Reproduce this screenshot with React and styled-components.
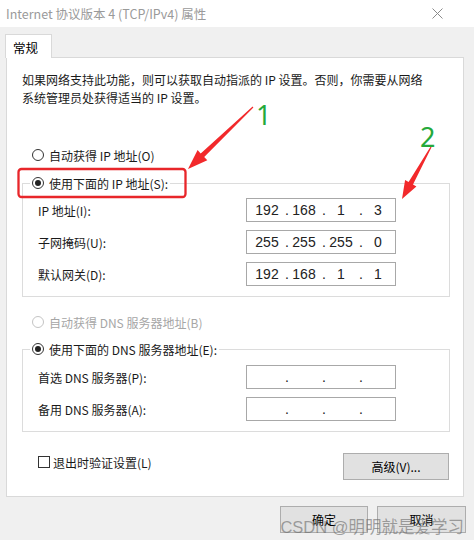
import React from "react";
import styled, { createGlobalStyle } from "styled-components";

const GlobalStyle = createGlobalStyle`
  html, body { margin: 0; padding: 0; background: #f0f0f0; }
  body { font-family: "Noto Sans CJK SC", "Noto Sans", sans-serif; }
`;

const arrowPoints = (tail, tip, headLen, headW, tailW, neckW) => {
  const dx = tip[0] - tail[0];
  const dy = tip[1] - tail[1];
  const len = Math.hypot(dx, dy);
  const ux = dx / len;
  const uy = dy / len;
  const nx = -uy;
  const ny = ux;
  const neck = [tip[0] - ux * headLen, tip[1] - uy * headLen];
  const p = (base, w) => [base[0] + nx * w, base[1] + ny * w];
  const pts = [
    p(tail, tailW / 2),
    p(neck, neckW / 2),
    p(neck, headW / 2),
    tip,
    p(neck, -headW / 2),
    p(neck, -neckW / 2),
    p(tail, -tailW / 2),
  ];
  return pts.map((q) => q.map((v) => v.toFixed(1)).join(",")).join(" ");
};

const App = () => {
  return (
    <>
      <GlobalStyle />
      <Window>
        <TitleBar>
          <Title>Internet 协议版本 4 (TCP/IPv4) 属性</Title>
          <CloseIcon viewBox="0 0 11 11">
            <path d="M0.5 0.5 L10.5 10.5 M10.5 0.5 L0.5 10.5" stroke="#8a8a8a" strokeWidth="1" />
          </CloseIcon>
        </TitleBar>
        <Body>
          <Tabs>
            <Tab>常规</Tab>
          </Tabs>
          <Panel>
            <Desc>
              如果网络支持此功能，则可以获取自动指派的 IP 设置。否则，你需要从网络
              <br />
              系统管理员处获得适当的 IP 设置。
            </Desc>
            <RadioRow $top={37}>
              <Radio />
              <span>自动获得 IP 地址(O)</span>
            </RadioRow>
            <Group $top={6}>
              <Legend>
                <Radio $checked />
                <span>使用下面的 IP 地址(S):</span>
              </Legend>
              <Fields $top={4}>
                <Label>IP 地址(I):</Label>
                <IpField value={["192", "168", "1", "3"]} />
                <Label>子网掩码(U):</Label>
                <IpField value={["255", "255", "255", "0"]} />
                <Label>默认网关(D):</Label>
                <IpField value={["192", "168", "1", "1"]} />
              </Fields>
            </Group>
            <RadioRow $top={14} $disabled>
              <Radio $disabled />
              <span>自动获得 DNS 服务器地址(B)</span>
            </RadioRow>
            <Group $top={5}>
              <Legend>
                <Radio $checked />
                <span>使用下面的 DNS 服务器地址(E):</span>
              </Legend>
              <Fields $top={5}>
                <Label>首选 DNS 服务器(P):</Label>
                <IpField value={["", "", "", ""]} />
                <Label>备用 DNS 服务器(A):</Label>
                <IpField value={["", "", "", ""]} />
              </Fields>
            </Group>
            <BottomRow>
              <CheckRow>
                <CheckBox />
                <span>退出时验证设置(L)</span>
              </CheckRow>
              <AdvancedButton>高级(V)...</AdvancedButton>
            </BottomRow>
          </Panel>
        </Body>
        <Footer>
          <Button $w={88}>确定</Button>
          <Button $w={89}>取消</Button>
        </Footer>

        {/* annotations drawn on top of the screenshot */}
        <Overlay viewBox="0 0 474 540">
          <rect x="18.5" y="169" width="167" height="28" rx="3" fill="none" stroke="#e8262a" strokeWidth="2.3" />
          <polygon points={arrowPoints([253, 107], [188, 169], 20, 14, 1.2, 5)} fill="#f2292b" />
          <polygon points={arrowPoints([431, 147], [402, 199], 18, 13, 1.2, 5)} fill="#f2292b" />
        </Overlay>
        <Mark $x={256} $y={99}>1</Mark>
        <Mark $x={420} $y={121}>2</Mark>
        <Watermark>CSDN @明明就是爱学习</Watermark>
      </Window>
    </>
  );
};

const IpField = ({ value }) => (
  <IpBox>
    {value.map((v, i) => (
      <React.Fragment key={i}>
        <Octet>{v}</Octet>
        {i < 3 && <Dot>.</Dot>}
      </React.Fragment>
    ))}
  </IpBox>
);

export default App;

const Window = styled.div`
  position: relative;
  width: 474px;
  height: 540px;
  background: #f0f0f0;
  overflow: hidden;
  color: #000;
  font-size: 12px;
`;
const TitleBar = styled.div`
  height: 27px;
  background: #fff;
  display: flex;
  align-items: center;
  justify-content: space-between;
  padding-left: 6px;
`;
const Title = styled.span`
  font-size: 12.5px;
  color: #9a9a9a;
`;
const CloseIcon = styled.svg`
  width: 11px;
  height: 11px;
  margin-right: 31px;
`;
const Body = styled.div`
  padding: 0 10px 0 6px;
`;
const Tabs = styled.div`
  height: 30px;
  display: flex;
  align-items: flex-end;
`;
const Tab = styled.div`
  position: relative;
  z-index: 1;
  box-sizing: border-box;
  width: 47px;
  height: 24px;
  margin-left: -1px;
  margin-bottom: -1px;
  padding: 3px 0 0 7px;
  background: #fff;
  border: 1px solid #d9d9d9;
  border-bottom: none;
  font-size: 12.5px;
`;
const Panel = styled.div`
  box-sizing: border-box;
  width: 458px;
  height: 440px;
  padding: 0 13px 0 15px;
  background: #fff;
  border: 1px solid #d9d9d9;
`;
const Desc = styled.p`
  margin: 13px 0 0;
  line-height: 18px;
  color: #1a1a1a;
`;
const RadioRow = styled.div`
  height: 22px;
  margin-top: ${(p) => p.$top}px;
  padding-left: 10px;
  display: flex;
  align-items: center;
  gap: 5px;
  color: ${(p) => (p.$disabled ? "#a6a6a6" : "#1a1a1a")};
`;
const Radio = styled.span`
  position: relative;
  box-sizing: border-box;
  width: 12px;
  height: 12px;
  border-radius: 50%;
  border: 1px solid ${(p) => (p.$disabled ? "#c4c4c4" : "#333")};
  background: #fff;
  flex: none;
  &::after {
    content: "";
    display: ${(p) => (p.$checked ? "block" : "none")};
    position: absolute;
    left: 2px;
    top: 2px;
    width: 6px;
    height: 6px;
    border-radius: 50%;
    background: #222;
  }
`;
const Group = styled.fieldset`
  margin: ${(p) => p.$top}px 0 0;
  padding: 0 0 10px 0;
  min-inline-size: 0;
  border: 1px solid #dcdcdc;
`;
const Legend = styled.legend`
  height: 22px;
  margin-left: 7px;
  padding: 0 2px;
  display: flex;
  align-items: center;
  gap: 5px;
  color: #1a1a1a;
`;
const Fields = styled.div`
  margin-top: ${(p) => p.$top}px;
  padding-left: 15px;
  display: grid;
  grid-template-columns: 208px 150px;
  row-gap: 8px;
  align-items: center;
`;
const Label = styled.span`
  color: #1a1a1a;
`;
const IpBox = styled.div`
  box-sizing: border-box;
  width: 150px;
  height: 24px;
  padding-left: 5px;
  border: 1px solid #a8a8a8;
  display: flex;
  align-items: center;
  font-family: "Liberation Sans", sans-serif;
  font-size: 14px;
  color: #222;
`;
const Octet = styled.span`
  width: 30px;
  text-align: center;
`;
const Dot = styled.span`
  width: 7px;
  text-align: right;
`;
const BottomRow = styled.div`
  margin-top: 22px;
  display: flex;
  align-items: flex-start;
  justify-content: space-between;
  padding-right: 1px;
`;
const CheckRow = styled.div`
  height: 16px;
  padding-left: 16px;
  display: flex;
  align-items: center;
  gap: 3px;
  color: #1a1a1a;
`;
const CheckBox = styled.span`
  box-sizing: border-box;
  width: 12px;
  height: 12px;
  border: 1px solid #333;
  background: #fff;
`;
const Button = styled.button`
  box-sizing: border-box;
  width: ${(p) => p.$w}px;
  height: 27px;
  padding: 0;
  background: #e1e1e1;
  border: 1px solid #adadad;
  font-family: "Noto Sans CJK SC", sans-serif;
  font-size: 12px;
  color: #000;
`;
const AdvancedButton = styled(Button)`
  width: 106px;
  margin-top: -1px;
`;
const Footer = styled.div`
  margin-top: 9px;
  padding-right: 8px;
  display: flex;
  justify-content: flex-end;
  gap: 9px;
`;
const Overlay = styled.svg`
  position: absolute;
  left: 0;
  top: 0;
  width: 474px;
  height: 540px;
  pointer-events: none;
`;
const Mark = styled.span`
  position: absolute;
  left: ${(p) => p.$x}px;
  top: ${(p) => p.$y}px;
  font-family: "Noto Sans", sans-serif;
  font-size: 27px;
  line-height: 1.2;
  color: #25a93b;
`;
const Watermark = styled.span`
  position: absolute;
  right: 10px;
  bottom: 5px;
  font-family: "Liberation Sans", "Noto Sans CJK SC", sans-serif;
  font-size: 16.5px;
  line-height: 1;
  color: rgba(105, 105, 105, 0.6);
  white-space: nowrap;
  pointer-events: none;
`;
